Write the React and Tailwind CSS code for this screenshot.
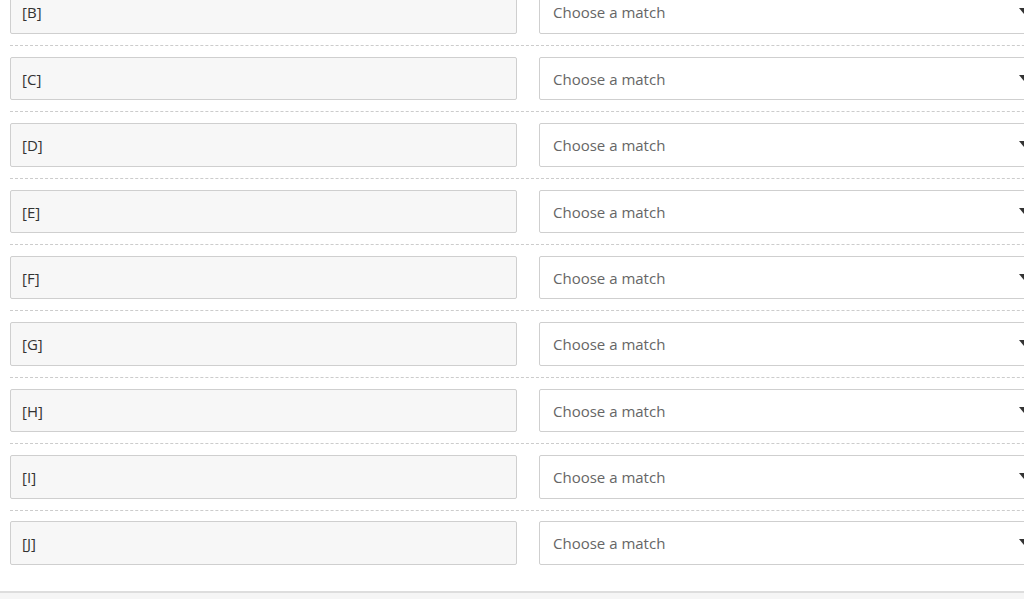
import React from 'react';

const items = ['B', 'C', 'D', 'E', 'F', 'G', 'H', 'I', 'J'];

const MatchRow = ({ label, last }) => (
  <div
    className={`flex gap-[22px] py-[10.95px] ${last ? '' : 'border-b border-dashed border-[#cccccc]'}`}
  >
    <div className="w-[507px] shrink-0 h-[43.5px] flex items-center px-[11px] pt-[1px] bg-[#f7f7f7] border border-[#cfcfcf] rounded-[2px] text-[15px] text-[#333333]">
      [{label}]
    </div>
    <div className="relative w-[507px] shrink-0 h-[43.5px] flex items-center px-[13px] pt-[1px] bg-white border border-[#cfcfcf] rounded-[2px] text-[15px] text-[#666666]">
      Choose a match
      <svg className="absolute right-[16px] top-[17px]" width="10" height="6" viewBox="0 0 10 6">
        <path d="M0 0 L10 0 L5 6 Z" fill="#333333" />
      </svg>
    </div>
  </div>
);

export default function App() {
  return (
    <div
      className="h-[599px] w-[1024px] overflow-hidden bg-white"
      style={{ fontFamily: '"Open Sans", "Noto Sans", sans-serif' }}
    >
      <div className="pl-[10px] -mt-[20.5px] w-[1100px]">
        {items.map((l, i) => (
          <MatchRow key={l} label={l} last={i === items.length - 1} />
        ))}
      </div>
      <div className="mt-[15px] border-t-2 border-[#dddddd] bg-[#f5f5f5] h-[20px]" />
    </div>
  );
}
